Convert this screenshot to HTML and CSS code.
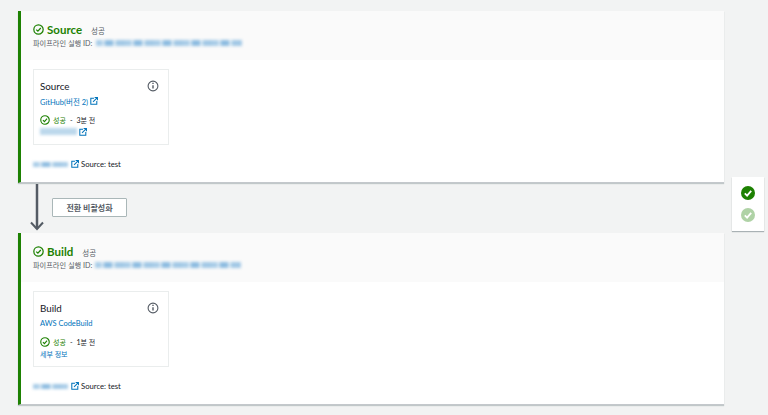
FILE: index.html
```html
<!DOCTYPE html>
<html lang="ko">
<head>
    <meta charset="UTF-8">
    <link rel="stylesheet" href="styles.css">
    <title>파이프라인</title>
</head>
<body>
    <svg class="defs" width="0" height="0">
        <symbol id="ok" viewBox="0 0 16 16">
            <circle cx="8" cy="8" r="6.8" fill="none" stroke="currentColor" stroke-width="1.8"/>
            <path d="M4.7 8.100l2.400 2.400 4.200-4.700" fill="none" stroke="currentColor" stroke-width="1.800"/>
        </symbol>
        <symbol id="ext" viewBox="0 0 10 10">
            <path d="M5 1.5H1v7.500h7.500V5" fill="none" stroke="currentColor" stroke-width="1.300"/>
            <path d="M3.800 6.200L8.800 1.200M5.800 .7h3.500v3.500" fill="none" stroke="currentColor" stroke-width="1.300"/>
        </symbol>
    </svg>

    <div class="pipeline">
        <section class="stage">
            <div class="stage-head">
                <div class="stage-title">
                    <svg class="ok-big"><use href="#ok"/></svg>
                    <h2>Source</h2>
                    <span class="stage-state">성공</span>
                </div>
                <div class="run-id">파이프라인 실행 ID: <span class="smudge w-run"></span></div>
            </div>
            <div class="stage-body">
                <div class="action">
                    <div class="action-top">
                        <span>Source</span>
                        <svg class="info" viewBox="0 0 12 12">
                            <circle cx="6" cy="6" r="4.900" fill="none" stroke="#545b64" stroke-width="1.100"/>
                            <path d="M6 2.800v1.300M6 5.200v3.200" stroke="#545b64" stroke-width="1.400"/>
                        </svg>
                    </div>
                    <a class="link provider">GitHub(버전 2) <svg class="ext"><use href="#ext"/></svg></a>
                    <div class="status"><svg class="ok-small"><use href="#ok"/></svg><b>성공</b><i>-</i>3분 전</div>
                    <a class="link detail"><span class="smudge w-commit"></span> <svg class="ext"><use href="#ext"/></svg></a>
                </div>
                <div class="commit">
                    <span class="smudge w-foot"></span>
                    <svg class="ext"><use href="#ext"/></svg>
                    <span>Source: test</span>
                </div>
            </div>
        </section>

        <div class="transition">
            <svg class="arrow" viewBox="0 0 14 47">
                <path d="M7 0v45" stroke="#545b64" stroke-width="2.500" fill="none"/>
                <path d="M1 38.500l6 6.500 6-6.500" stroke="#545b64" stroke-width="2" fill="none"/>
            </svg>
            <button type="button" class="btn">전환 비활성화</button>
        </div>

        <section class="stage">
            <div class="stage-head">
                <div class="stage-title">
                    <svg class="ok-big"><use href="#ok"/></svg>
                    <h2>Build</h2>
                    <span class="stage-state">성공</span>
                </div>
                <div class="run-id">파이프라인 실행 ID: <span class="smudge w-run2"></span></div>
            </div>
            <div class="stage-body">
                <div class="action">
                    <div class="action-top">
                        <span>Build</span>
                        <svg class="info" viewBox="0 0 12 12">
                            <circle cx="6" cy="6" r="4.900" fill="none" stroke="#545b64" stroke-width="1.100"/>
                            <path d="M6 2.800v1.300M6 5.200v3.200" stroke="#545b64" stroke-width="1.400"/>
                        </svg>
                    </div>
                    <a class="link provider">AWS CodeBuild</a>
                    <div class="status"><svg class="ok-small"><use href="#ok"/></svg><b>성공</b><i>-</i>1분 전</div>
                    <a class="link detail">세부 정보</a>
                </div>
                <div class="commit">
                    <span class="smudge w-foot"></span>
                    <svg class="ext"><use href="#ext"/></svg>
                    <span>Source: test</span>
                </div>
            </div>
        </section>
    </div>

    <div class="minimap">
        <svg class="dot" viewBox="0 0 14 14">
            <circle cx="7" cy="7" r="7" fill="#1d8102"/>
            <path d="M3.800 7.300l2.300 2.300 4.100-4.800" fill="none" stroke="#fff" stroke-width="1.800"/>
        </svg>
        <svg class="dot faded" viewBox="0 0 14 14">
            <circle cx="7" cy="7" r="7" fill="#1d8102"/>
            <path d="M3.800 7.300l2.300 2.300 4.100-4.800" fill="none" stroke="#fff" stroke-width="1.800"/>
        </svg>
    </div>
</body>
</html>
```

FILE: styles.css
```css
body{
    margin: 0;
    background: #f2f3f3;
    color: #16191f;
    font-family: Lato, "Noto Sans CJK KR", sans-serif;
    font-size: 8px;
    height: 415px;
    overflow: hidden;
}
.defs{
    position: absolute;
}
.pipeline{
    width: 706px;
    padding: 11px 0 0 18px;
}
.stage{
    height: 172px;
    background: #fff;
    border-left: 3px solid #1d8102;
    border-bottom: 1px solid #c4c8cc;
    box-shadow: 0 1px 1px rgba(0,28,36,.2);
    box-sizing: border-box;
}
.stage-head{
    height: 49px;
    padding: 10px 12px 0;
    box-sizing: border-box;
    background: #fafafa;
}
.stage-title{
    display: flex;
    align-items: center;
    height: 17px;
}
.stage-title h2{
    margin: 0 0 0 3px;
    font-size: 11.500px;
    line-height: 17px;
    font-weight: 700;
    color: #1d8102;
}
.ok-big{
    width: 11px;
    height: 11px;
    color: #1d8102;
}
.stage-state{
    font-size: 7.500px;
    color: #545b64;
    margin: 1px 0 0 9px;
}
.run-id{
    display: flex;
    align-items: center;
    height: 11px;
    margin-top: -1px;
    font-size: 7.200px;
    color: #545b64;
    white-space: pre;
}
.smudge{
    display: inline-block;
    height: 6px;
    background: repeating-linear-gradient(90deg, #a9cde8 0 6px, #cfe2f1 6px 9px, #8dbce0 9px 17px, #d6e7f3 17px 20px, #a2c8e5 20px 29px);
    filter: blur(1.500px);
}
.w-run{
    width: 146px;
    margin-left: 2px;
}
.w-run2{
    width: 146px;
    margin-left: 1px;
}
.w-commit{
    width: 37px;
    height: 7px;
    background: #bcd8ec;
}
.w-foot{
    width: 35px;
    height: 5px;
}
.stage-body{
    padding: 9px 12px 0;
}
.action{
    width: 136px;
    height: 76px;
    box-sizing: border-box;
    padding: 8px 9px 0 6px;
    border: 1px solid #eaeded;
    background: #fff;
}
.action-top{
    display: flex;
    justify-content: space-between;
    align-items: center;
    height: 15px;
    font-size: 9.800px;
    color: #16191f;
}
.info{
    width: 12px;
    height: 12px;
}
.link{
    color: #0073bb;
    display: flex;
    align-items: center;
    gap: 2px;
}
.provider{
    height: 12px;
    margin-top: 2px;
    font-size: 7.500px;
}
.ext{
    width: 8px;
    height: 8px;
    color: #0073bb;
    flex: none;
}
.status{
    display: flex;
    align-items: center;
    height: 14px;
    margin-top: 6px;
    font-size: 7px;
    color: #16191f;
}
.status b{
    font-weight: 400;
    color: #1d8102;
}
.status i{
    font-style: normal;
    margin: 0 4px;
}
.ok-small{
    width: 10px;
    height: 10px;
    margin-right: 3px;
    color: #1d8102;
}
.detail{
    height: 11px;
    margin-top: -1px;
    font-size: 7px;
}
.commit{
    display: flex;
    align-items: center;
    gap: 2px;
    margin-top: 13px;
    height: 12px;
    font-size: 7.700px;
    color: #16191f;
}
.commit .ext{
    margin: 0 0 0 1px;
}
.transition{
    display: flex;
    align-items: flex-start;
    height: 50px;
    box-sizing: border-box;
    padding: 1px 0 0 12px;
}
.arrow{
    width: 14px;
    height: 47px;
}
.btn{
    width: 75px;
    height: 19px;
    margin: 14px 0 0 8px;
    padding: 0;
    font: 700 8px Lato, "Noto Sans CJK KR", sans-serif;
    color: #545b64;
    background: #fff;
    border: 1px solid #aab7b8;
    border-radius: 1px;
}
.minimap{
    position: absolute;
    left: 732px;
    top: 177px;
    width: 32px;
    height: 54px;
    background: #fff;
    box-shadow: 0 1px 1px rgba(0,28,36,.3);
    display: flex;
    flex-direction: column;
    align-items: center;
    gap: 8px;
    padding-top: 9px;
    box-sizing: border-box;
}
.dot{
    width: 14px;
    height: 14px;
    flex: none;
}
.faded{
    opacity: .35;
}
```
